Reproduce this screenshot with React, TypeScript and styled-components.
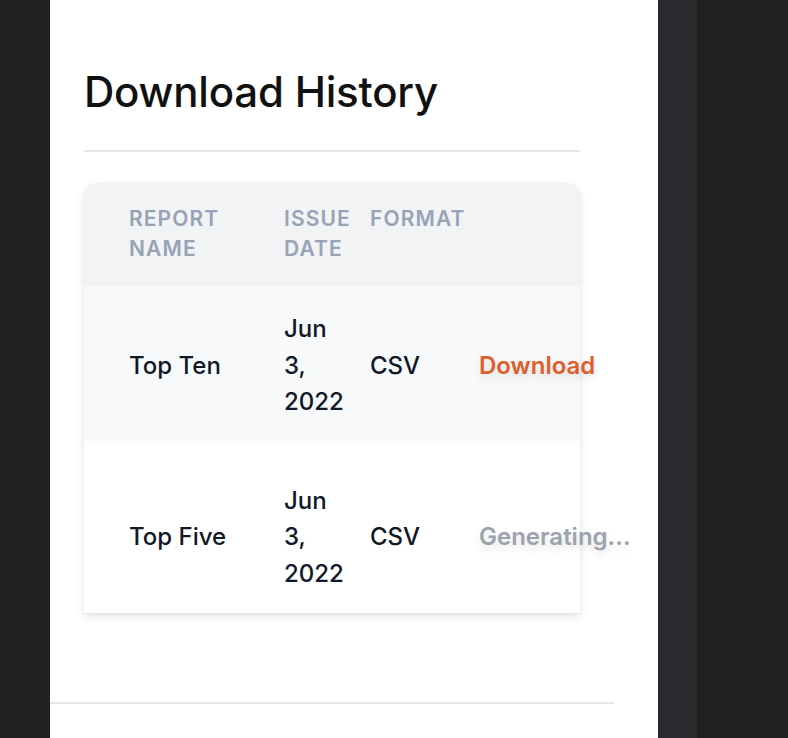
import React from "react"
import styled, { createGlobalStyle } from "styled-components"

const GlobalStyle = createGlobalStyle`
  html, body {
    margin: 0;
    padding: 0;
    background: #222224;
  }
  body {
    font-family: Inter, "Noto Sans", "Liberation Sans", sans-serif;
    -webkit-font-smoothing: antialiased;
  }
`

const Frame = styled.div`
  display: flex;
  height: 100vh;
  min-height: 738px;
  overflow: hidden;
`

const LeftStrip = styled.div`
  width: 50px;
  flex-shrink: 0;
  background: #222224;
`

const Panel = styled.main`
  width: 608px;
  flex-shrink: 0;
  background: #ffffff;
  display: flex;
  flex-direction: column;
`

const Rail = styled.div`
  width: 39px;
  flex-shrink: 0;
  background: #2a2b2f;
`

const Rest = styled.div`
  flex: 1;
  background: #212122;
`

const Section = styled.section`
  padding: 67px 78px 0 34px;
`

const Title = styled.h1`
  margin: 0;
  font-size: 42px;
  line-height: 50px;
  font-weight: 500;
  color: #111111;
  letter-spacing: -0.2px;
`

const Divider = styled.hr`
  margin: 33px 0 0;
  border: none;
  height: 2px;
  background: #e3e5e8;
`

const Card = styled.div`
  margin-top: 31px;
  border-radius: 12px 12px 2px 2px;
  box-shadow: 0 4px 10px rgba(0, 0, 0, 0.1), 0 1px 3px rgba(0, 0, 0, 0.05);
  background: #ffffff;
`

const Row = styled.div<{ $bg: string; $top: number; $bottom: number; $head?: boolean }>`
  display: grid;
  grid-template-columns: 155px 86px 109px 1fr;
  align-items: center;
  padding: ${(p) => p.$top}px 0 ${(p) => p.$bottom}px 45px;
  background: ${(p) => p.$bg};
  border-radius: ${(p) => (p.$head ? "12px 12px 0 0" : "0")};
`

const HeadCell = styled.div`
  align-self: start;
  width: min-content;
  font-size: 21px;
  line-height: 30px;
  font-weight: 600;
  letter-spacing: 1.1px;
  text-transform: uppercase;
  color: #97a3b6;
`

const Cell = styled.div<{ $narrow?: boolean }>`
  font-size: 24px;
  line-height: 36.5px;
  font-weight: 500;
  color: #111827;
  white-space: nowrap;
  ${(p) => (p.$narrow ? "width: min-content; white-space: normal;" : "")}
`

const Action = styled.span<{ $ready: boolean }>`
  font-size: 24px;
  line-height: 36px;
  font-weight: 600;
  white-space: nowrap;
  color: ${(p) => (p.$ready ? "#dc5f2c" : "#9ca3af")};
  text-shadow: 0 4px 10px rgba(0, 0, 0, 0.12);
  cursor: ${(p) => (p.$ready ? "pointer" : "default")};
`

const Footer = styled.div`
  margin-top: 89px;
  width: 564px;
  height: 2px;
  background: #e7e8ec;
`

type Report = {
  name: string
  date: string
  format: string
  ready: boolean
  top: number
  bottom: number
  bg: string
}

const reports: Report[] = [
  { name: "Top Ten", date: "Jun 3, 2022", format: "CSV", ready: true, top: 25, bottom: 20, bg: "#f8f9fb" },
  { name: "Top Five", date: "Jun 3, 2022", format: "CSV", ready: false, top: 42, bottom: 21, bg: "#ffffff" },
]

export default function App() {
  return (
    <>
      <GlobalStyle />
      <Frame>
        <LeftStrip />
        <Panel>
          <Section>
            <Title>Download History</Title>
            <Divider />
            <Card>
              <Row $bg="#f1f3f5" $top={21} $bottom={22} $head>
                <HeadCell>Report Name</HeadCell>
                <HeadCell>Issue Date</HeadCell>
                <HeadCell>Format</HeadCell>
                <div />
              </Row>
              {reports.map((r) => (
                <Row key={r.name} $bg={r.bg} $top={r.top} $bottom={r.bottom}>
                  <Cell>{r.name}</Cell>
                  <Cell $narrow>{r.date}</Cell>
                  <Cell>{r.format}</Cell>
                  <Action $ready={r.ready}>{r.ready ? "Download" : "Generating..."}</Action>
                </Row>
              ))}
            </Card>
          </Section>
          <Footer />
        </Panel>
        <Rail />
        <Rest />
      </Frame>
    </>
  )
}
